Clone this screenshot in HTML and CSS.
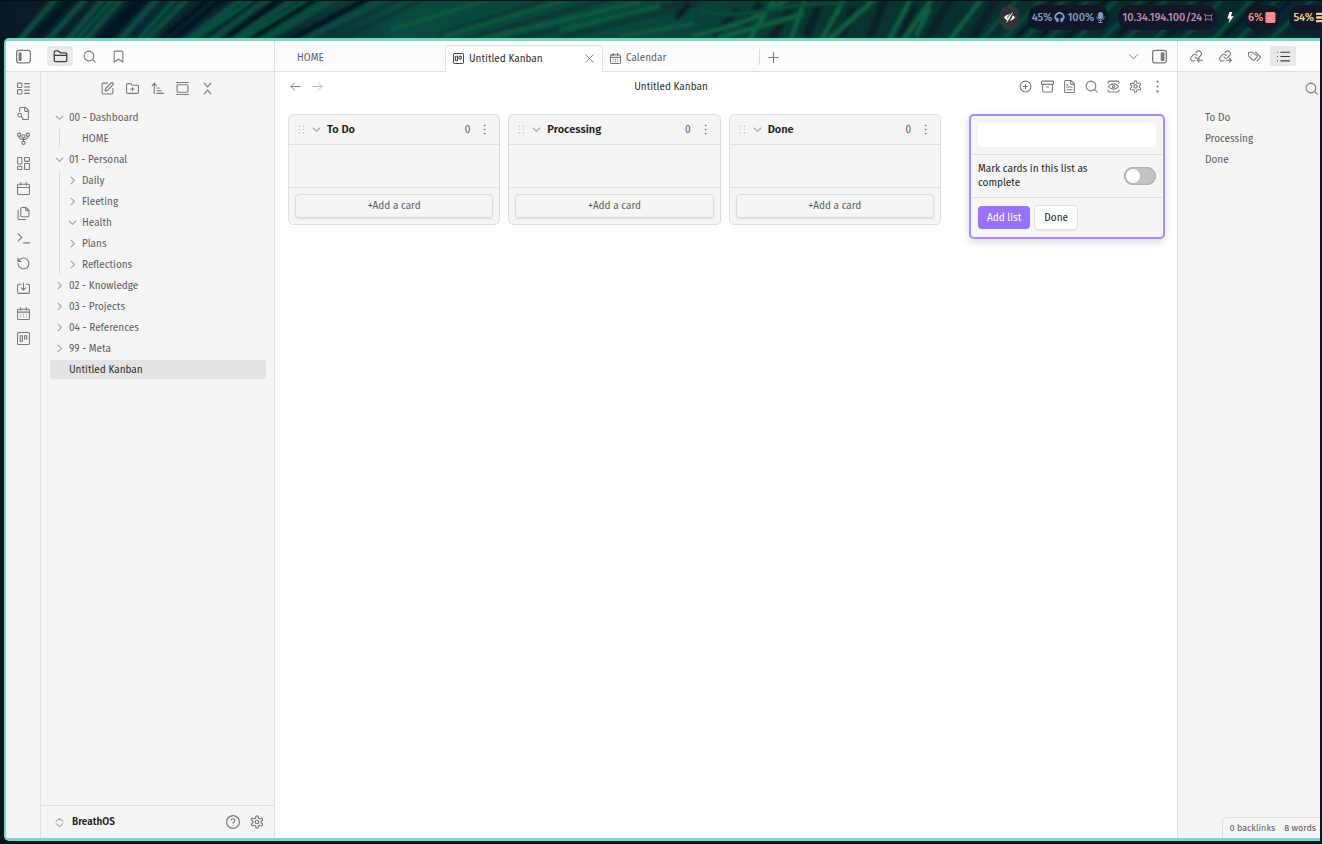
FILE: index.html
```html
<!DOCTYPE html>
<html lang="en">
<head>
<meta charset="utf-8">
<title>Untitled Kanban - BreathOS</title>
<link rel="stylesheet" href="styles.css">
</head>
<body>
<svg class="sprite" aria-hidden="true">
  <symbol id="panel" viewBox="0 0 24 24"><rect x="1" y="2" width="22" height="20" rx="4"/><rect x="5" y="6" width="3" height="12" rx="1" fill="currentColor"/></symbol>
  <symbol id="panel-right" viewBox="0 0 24 24"><rect x="1" y="2" width="22" height="20" rx="4"/><rect x="15" y="6" width="4" height="12" rx="1" fill="currentColor"/></symbol>
  <symbol id="folder" viewBox="0 0 24 24"><path d="M20 20a2 2 0 0 0 2-2V8a2 2 0 0 0-2-2h-7.900a2 2 0 0 1-1.690-.9L9.600 3.900A2 2 0 0 0 7.930 3H4a2 2 0 0 0-2 2v13a2 2 0 0 0 2 2ZM2 10h20"/></symbol>
  <symbol id="search" viewBox="0 0 24 24"><circle cx="11" cy="11" r="9"/><path d="m22.500 22.500-5-5"/></symbol>
  <symbol id="bookmark" viewBox="0 0 24 24"><path d="m20 22-8-5-8 5V4a2 2 0 0 1 2-2h12a2 2 0 0 1 2 2Z"/></symbol>
  <symbol id="list-grid" viewBox="0 0 24 24"><rect x="1" y="2" width="8" height="8" rx="1"/><rect x="1" y="14" width="8" height="8" rx="1"/><path d="M14 3h9M14 9h9M14 15h9M14 21h9"/></symbol>
  <symbol id="file-search" viewBox="0 0 24 24"><path d="M14 2v4a2 2 0 0 0 2 2h5M5 8V3a2 2 0 0 1 2-2h9l5 5v15a2 2 0 0 1-2 2H10M8 18l3 3"/><circle cx="5" cy="15" r="3.500"/></symbol>
  <symbol id="fork" viewBox="0 0 24 24"><circle cx="4" cy="5" r="3"/><circle cx="20" cy="5" r="3"/><circle cx="12" cy="8" r="3"/><circle cx="12" cy="20" r="3"/><path d="M4 8c0 4 3 6 8 6s8-2 8-6M12 11v6"/></symbol>
  <symbol id="dashboard" viewBox="0 0 24 24"><rect x="1" y="1" width="8" height="12" rx="1"/><rect x="14" y="1" width="9" height="7" rx="1"/><rect x="14" y="12" width="9" height="11" rx="1"/><rect x="1" y="17" width="8" height="6" rx="1"/></symbol>
  <symbol id="calendar" viewBox="0 0 24 24"><rect x="1" y="4" width="22" height="19" rx="2"/><path d="M7 1v5M17 1v5M1 10h22"/></symbol>
  <symbol id="files" viewBox="0 0 24 24"><path d="M22 7h-4a2 2 0 0 1-2-2V1M9 18a2 2 0 0 1-2-2V3a2 2 0 0 1 2-2h8l5 5v10a2 2 0 0 1-2 2ZM2 6v15a2 2 0 0 0 2 2h12"/></symbol>
  <symbol id="terminal" viewBox="0 0 24 24"><path d="m2 17 7-7-7-7M12 20h11"/></symbol>
  <symbol id="rotate" viewBox="0 0 24 24"><path d="M2 12A10 10 0 1 0 12 2a10.500 10.500 0 0 0-7.500 3L1.500 8M1.500 2v6h6"/></symbol>
  <symbol id="import" viewBox="0 0 24 24"><path d="M12 2v13M8 11l4 4 4-4M7 4H3a2 2 0 0 0-2 2v13a2 2 0 0 0 2 2h18a2 2 0 0 0 2-2V6a2 2 0 0 0-2-2h-4"/></symbol>
  <symbol id="calendar-days" viewBox="0 0 24 24"><rect x="1" y="4" width="22" height="19" rx="2"/><path d="M7 1v5M17 1v5M1 9.500h22M7 14h.01M12 14h.01M17 14h.01M7 18h.01M12 18h.01M17 18h.01"/></symbol>
  <symbol id="kanban" viewBox="0 0 24 24"><rect x="1" y="1" width="22" height="22" rx="2"/><path d="M6 7h4v10H6ZM14 7h4v6h-4Z"/></symbol>
  <symbol id="edit" viewBox="0 0 24 24"><path d="M12 2H4a2 2 0 0 0-2 2v16a2 2 0 0 0 2 2h16a2 2 0 0 0 2-2v-8M18.400 2a2.300 2.300 0 0 1 3.500 3.500L12 15.500l-4.500 1 1-4.500Z"/></symbol>
  <symbol id="folder-plus" viewBox="0 0 24 24"><path d="M21 21a2 2 0 0 0 2-2V8a2 2 0 0 0-2-2h-8.900a2 2 0 0 1-1.690-.9L9.600 3.900A2 2 0 0 0 7.930 3H3a2 2 0 0 0-2 2v14a2 2 0 0 0 2 2ZM12 10v6M9 13h6"/></symbol>
  <symbol id="sort" viewBox="0 0 24 24"><path d="m2 7 4-5 4 5M6 2v19M11 11h4M11 16h8M11 21h12"/></symbol>
  <symbol id="gallery" viewBox="0 0 24 24"><path d="M1 1h22M1 23h22"/><rect x="2" y="5" width="20" height="14" rx="2"/></symbol>
  <symbol id="collapse" viewBox="0 0 24 24"><path d="m6 22 6-7 6 7M6 2l6 7 6-7"/></symbol>
  <symbol id="updown" viewBox="0 0 24 24"><path d="m3 15 9 8 9-8M3 9l9-8 9 8"/></symbol>
  <symbol id="down" viewBox="0 0 24 24"><path d="m3 8 9 9 9-9"/></symbol>
  <symbol id="right" viewBox="0 0 24 24"><path d="m8 3 9 9-9 9"/></symbol>
  <symbol id="x" viewBox="0 0 24 24"><path d="M4 4l16 16M20 4 4 20"/></symbol>
  <symbol id="plus" viewBox="0 0 24 24"><path d="M12 3v18M3 12h18"/></symbol>
  <symbol id="back" viewBox="0 0 24 24"><path d="m10 20-8-8 8-8M2 12h20"/></symbol>
  <symbol id="forward" viewBox="0 0 24 24"><path d="m14 4 8 8-8 8M2 12h20"/></symbol>
  <symbol id="circle-plus" viewBox="0 0 24 24"><circle cx="12" cy="12" r="10"/><path d="M8 12h8M12 8v8"/></symbol>
  <symbol id="archive" viewBox="0 0 24 24"><rect x="1" y="2" width="22" height="6" rx="1"/><path d="M3 8v12a2 2 0 0 0 2 2h14a2 2 0 0 0 2-2V8M10 13h4"/></symbol>
  <symbol id="file" viewBox="0 0 24 24"><path d="M15 1H5a2 2 0 0 0-2 2v18a2 2 0 0 0 2 2h14a2 2 0 0 0 2-2V7ZM14 1v5a2 2 0 0 0 2 2h5M9 9H7M17 13H7M17 18H7"/></symbol>
  <symbol id="view" viewBox="0 0 24 24"><path d="M2 6V4a2 2 0 0 1 2-2h16a2 2 0 0 1 2 2v2M2 18v2a2 2 0 0 0 2 2h16a2 2 0 0 0 2-2v-2M2.500 12C7 5.500 17 5.500 21.500 12 17 18.500 7 18.500 2.500 12Z"/><circle cx="12" cy="12" r="2"/></symbol>
  <symbol id="gear" viewBox="0 0 24 24"><path d="M12.200 1.500h-.4a2 2 0 0 0-2 2v.7a2 2 0 0 1-1 1.700l-.4.300a2 2 0 0 1-2 0l-.7-.4a2 2 0 0 0-2.700.7l-.2.400a2 2 0 0 0 .7 2.700l.7.400a2 2 0 0 1 1 1.700v.5a2 2 0 0 1-1 1.800l-.7.400a2 2 0 0 0-.7 2.700l.2.400a2 2 0 0 0 2.700.7l.7-.4a2 2 0 0 1 2 0l.4.300a2 2 0 0 1 1 1.700v.7a2 2 0 0 0 2 2h.4a2 2 0 0 0 2-2v-.7a2 2 0 0 1 1-1.700l.4-.3a2 2 0 0 1 2 0l.7.400a2 2 0 0 0 2.700-.7l.2-.4a2 2 0 0 0-.7-2.700l-.7-.4a2 2 0 0 1-1-1.700v-.5a2 2 0 0 1 1-1.800l.7-.4a2 2 0 0 0 .7-2.700l-.2-.4a2 2 0 0 0-2.700-.7l-.7.400a2 2 0 0 1-2 0l-.4-.3a2 2 0 0 1-1-1.700v-.7a2 2 0 0 0-2-2Z"/><circle cx="12" cy="12" r="3"/></symbol>
  <symbol id="dots" viewBox="0 0 24 24"><g fill="currentColor"><circle cx="12" cy="3" r="1"/><circle cx="12" cy="12" r="1"/><circle cx="12" cy="21" r="1"/></g></symbol>
  <symbol id="grip" viewBox="0 0 24 24"><path d="M6 3h.01M6 12h.01M6 21h.01M17 3h.01M17 12h.01M17 21h.01"/></symbol>
  <symbol id="link-in" viewBox="0 0 24 24"><path d="M9 13a4.500 4.500 0 0 0 7 1l3.500-3.500a4.800 4.800 0 0 0-7-7L11 5M13 10a4.500 4.500 0 0 0-7-1l-3.500 3.500a4.800 4.800 0 0 0 6.500 7M23 19h-9M17 15.500l-3.500 3.500 3.500 3.500"/></symbol>
  <symbol id="link-out" viewBox="0 0 24 24"><path d="M9 13a4.500 4.500 0 0 0 7 1l3.500-3.500a4.800 4.800 0 0 0-7-7L11 5M13 10a4.500 4.500 0 0 0-7-1l-3.500 3.500a4.800 4.800 0 0 0 6.500 7M13.500 19h9M19.500 15.500l3.500 3.500-3.500 3.500"/></symbol>
  <symbol id="tags" viewBox="0 0 24 24"><path d="M8 4H2a1 1 0 0 0-1 1v6l7.300 7.300a2.400 2.400 0 0 0 3.400 0l4.600-4.600a2.400 2.400 0 0 0 0-3.400ZM14 4l8 8a2 2 0 0 1 0 2.800L17 20M6 9h.01"/></symbol>
  <symbol id="list" viewBox="0 0 24 24"><path d="M7 4h16M7 12h16M7 20h16M1 4h.01M1 12h.01M1 20h.01"/></symbol>
  <symbol id="help" viewBox="0 0 24 24"><circle cx="12" cy="12" r="11"/><path d="M9 9a3 3 0 0 1 6 1c0 2-3 2.500-3 4M12 17.500h.01"/></symbol>
  <symbol id="eye-off" viewBox="0 0 24 24"><path fill="currentColor" stroke="none" d="M0 12C5 3 19 3 24 12 19 21 5 21 0 12Z"/><circle cx="12" cy="12" r="4" fill="none" stroke="#2f3635"/><path d="m9 22 10-18" stroke="#2f3635" stroke-width="3"/><path d="m6 22 12-20"/></symbol>
  <symbol id="headphones" viewBox="0 0 24 24"><path d="M5 17a9 9 0 1 1 14 0" stroke-width="4"/><path d="M5 14h4v7H7ZM19 14h-4v7h2Z" fill="currentColor"/></symbol>
  <symbol id="mic" viewBox="0 0 18 24"><rect x="4" y="1" width="10" height="14" rx="5" fill="currentColor"/><path d="M1 11c0 10 16 10 16 0M9 18v5M5 23h8" stroke-width="2"/></symbol>
  <symbol id="net" viewBox="0 0 24 24"><path d="M2 4l5 3h10l5-3-3 6 2 10-6-3H8l-5 4 2-8Z"/></symbol>
  <symbol id="bolt" viewBox="0 0 18 24"><path d="m7 0-5 14h5l-2 10L16 9h-6l3-9Z" fill="currentColor" stroke="none"/></symbol>
  <symbol id="chip" viewBox="0 0 24 24"><path d="M3 1h18v22H3ZM1 5h22M1 9h22M1 14h22M1 19h22" fill="currentColor"/></symbol>
  <symbol id="bars" viewBox="0 0 24 24"><path d="M2 4h20M2 12h20M2 20h20" stroke-width="5"/></symbol>
</svg>
<div class="desktop">
  <header class="statusbar">
    <svg class="wallpaper" viewBox="0 0 1322 38" preserveAspectRatio="none" aria-hidden="true">
      <defs>
        <linearGradient id="wall"><stop offset="0" stop-color="#081925"/><stop offset=".12" stop-color="#082b33"/><stop offset=".2" stop-color="#08232d"/><stop offset=".3" stop-color="#0a4a40"/><stop offset=".36" stop-color="#09483d"/><stop offset=".5" stop-color="#0a463b"/><stop offset=".62" stop-color="#08352f"/><stop offset="1" stop-color="#07262d"/></linearGradient>
        <filter id="soft"><feGaussianBlur stdDeviation="1.500"/></filter>
      </defs>
      <rect width="1322" height="38" fill="url(#wall)"/>
      <g filter="url(#soft)" fill="none">
        <path stroke="#0b4a40" stroke-width="6" d="M18 42 58-4M46 42 88-4M66 42 106-4M84 42 124-4M118 42 160-4M144 42 190-4M184 42 246-4M208 42 272-4M228 42 300-4M262 42 340-4M300 42 390-4"/>
        <path stroke="#06583c" stroke-width="4" d="M74 42 116-4M136 42 178-4M190 42 258-4M216 42 288-4M236 42 314-4M252 42 330-4"/>
        <path stroke="#061722" stroke-width="6" d="M32 42 74-4M98 42 140-4M106 42 148-4M158 42 212-4M170 42 226-4M220 42 286-4M246 42 322-4M286 42 372-4"/>
        <path stroke="#08312f" stroke-width="3" d="M308 42 406-4M336 42 430-4M440 34 560-4M456 42 620-4M500 42 700-2M560 38 700 4M600 22 720-4"/>
        <path stroke="#08573d" stroke-width="5" d="M444 36 580-4M470 42 640 2M390 30 500-4M620 36 694 24M560 30 660 6"/>
        <path stroke="#071a26" stroke-width="6" d="M676 18 690 4M714 36 738 10M744 26 760 4M770 40 790 10M806 36 822 0M838 42 854 8M868 42 886-4M900 40 914 6M926 42 952-4M970 42 998-4"/>
        <path stroke="#075f40" stroke-width="5" d="M692 36C736 26 760 18 792-4M718 38 804 14M748 42 776-4M790 42 806-4M820 42 846-4M826 42 876-2M888 42 912-4M902 42 934-4M916 36 930 8M948 42 984-4"/>
        <path stroke="#07493b" stroke-width="4" d="M700 10C744 24 780 0 844 4M980 42 1020-4M1000 42 1046-4M1022 42 1068-4M1046 42 1092-4M1074 42 1120-4M1100 42 1146-4M1124 42 1170-4M1152 42 1198-4M1180 42 1226-4M1210 42 1256-4M1236 42 1280-4M1268 42 1316-4"/>
        <path stroke="#061a25" stroke-width="4" d="M1012 42 1058-4M1036 42 1082-4M1064 42 1110-4M1112 42 1158-4M1162 42 1208-4M1220 42 1264-4M1250 42 1294-4"/>
      </g>
      <path d="M0 0h1322" stroke="#06120f" stroke-width="2"/>
    </svg>
    <span class="pill eye"><svg class="icon"><use href="#eye-off"/></svg></span>
    <span class="pill audio">45% <svg class="icon"><use href="#headphones"/></svg>100% <svg class="icon slim"><use href="#mic"/></svg></span>
    <span class="pill net">10.34.194.100/24 <svg class="icon slim"><use href="#net"/></svg></span>
    <span class="pill bolt"><svg class="icon slim"><use href="#bolt"/></svg></span>
    <span class="pill cpu">6% <svg class="icon"><use href="#chip"/></svg></span>
    <span class="pill mem">54% <svg class="icon"><use href="#bars"/></svg></span>
  </header>

  <div class="window">
    <section class="left">
      <div class="pane-head left-head">
        <button class="tool" aria-label="Toggle left sidebar"><svg class="icon large"><use href="#panel"/></svg></button>
        <nav class="head-tabs">
          <button class="head-tab active" aria-label="Files"><svg class="icon large"><use href="#folder"/></svg></button>
          <button class="head-tab" aria-label="Search"><svg class="icon"><use href="#search"/></svg></button>
          <button class="head-tab" aria-label="Bookmarks"><svg class="icon"><use href="#bookmark"/></svg></button>
        </nav>
      </div>
      <div class="left-body">
        <nav class="ribbon">
          <button class="tool" aria-label="Bases"><svg class="icon"><use href="#list-grid"/></svg></button>
          <button class="tool" aria-label="Quick switcher"><svg class="icon"><use href="#file-search"/></svg></button>
          <button class="tool" aria-label="Graph view"><svg class="icon"><use href="#fork"/></svg></button>
          <button class="tool" aria-label="Canvas"><svg class="icon"><use href="#dashboard"/></svg></button>
          <button class="tool" aria-label="Daily note"><svg class="icon"><use href="#calendar"/></svg></button>
          <button class="tool" aria-label="Templates"><svg class="icon"><use href="#files"/></svg></button>
          <button class="tool" aria-label="Command palette"><svg class="icon"><use href="#terminal"/></svg></button>
          <button class="tool" aria-label="Reload"><svg class="icon"><use href="#rotate"/></svg></button>
          <button class="tool" aria-label="Import"><svg class="icon"><use href="#import"/></svg></button>
          <button class="tool" aria-label="Calendar"><svg class="icon"><use href="#calendar-days"/></svg></button>
          <button class="tool" aria-label="New board"><svg class="icon"><use href="#kanban"/></svg></button>
        </nav>
        <div class="explorer">
          <div class="file-tools">
            <button class="tool" aria-label="New note"><svg class="icon"><use href="#edit"/></svg></button>
            <button class="tool" aria-label="New folder"><svg class="icon"><use href="#folder-plus"/></svg></button>
            <button class="tool" aria-label="Sort"><svg class="icon"><use href="#sort"/></svg></button>
            <button class="tool" aria-label="Reveal file"><svg class="icon"><use href="#gallery"/></svg></button>
            <button class="tool" aria-label="Collapse all"><svg class="icon"><use href="#collapse"/></svg></button>
          </div>
          <ul class="tree">
            <li><a class="row" href="#"><svg class="icon chev"><use href="#down"/></svg>00 - Dashboard</a>
              <ul class="branch"><li><a class="row leaf" href="#">HOME</a></li></ul></li>
            <li><a class="row" href="#"><svg class="icon chev"><use href="#down"/></svg>01 - Personal</a>
              <ul class="branch">
                <li><a class="row" href="#"><svg class="icon chev"><use href="#right"/></svg>Daily</a></li>
                <li><a class="row" href="#"><svg class="icon chev"><use href="#right"/></svg>Fleeting</a></li>
                <li><a class="row" href="#"><svg class="icon chev"><use href="#down"/></svg>Health</a></li>
                <li><a class="row" href="#"><svg class="icon chev"><use href="#right"/></svg>Plans</a></li>
                <li><a class="row" href="#"><svg class="icon chev"><use href="#right"/></svg>Reflections</a></li>
              </ul></li>
            <li><a class="row" href="#"><svg class="icon chev"><use href="#right"/></svg>02 - Knowledge</a></li>
            <li><a class="row" href="#"><svg class="icon chev"><use href="#right"/></svg>03 - Projects</a></li>
            <li><a class="row" href="#"><svg class="icon chev"><use href="#right"/></svg>04 - References</a></li>
            <li><a class="row" href="#"><svg class="icon chev"><use href="#right"/></svg>99 - Meta</a></li>
            <li><a class="row leaf selected" href="#">Untitled Kanban</a></li>
          </ul>
          <footer class="vault">
            <button class="vault-name"><svg class="icon chev"><use href="#updown"/></svg>BreathOS</button>
            <button class="tool" aria-label="Help"><svg class="icon"><use href="#help"/></svg></button>
            <button class="tool" aria-label="Settings"><svg class="icon"><use href="#gear"/></svg></button>
          </footer>
        </div>
      </div>
    </section>

    <main class="main">
      <div class="pane-head tabs">
        <a class="tab home" href="#">HOME</a>
        <div class="tab current"><svg class="icon small"><use href="#kanban"/></svg><a href="#">Untitled Kanban</a><button class="tool" aria-label="Close tab"><svg class="icon small"><use href="#x"/></svg></button></div>
        <a class="tab" href="#"><svg class="icon small"><use href="#calendar-days"/></svg>Calendar</a>
        <button class="tool new-tab" aria-label="New tab"><svg class="icon"><use href="#plus"/></svg></button>
        <button class="tool tab-list" aria-label="Tab list"><svg class="icon small"><use href="#down"/></svg></button>
        <button class="tool" aria-label="Toggle right sidebar"><svg class="icon large"><use href="#panel-right"/></svg></button>
      </div>
      <div class="view-head">
        <div class="history">
          <button class="tool" aria-label="Back"><svg class="icon small"><use href="#back"/></svg></button>
          <button class="tool" aria-label="Forward" disabled><svg class="icon small"><use href="#forward"/></svg></button>
        </div>
        <h1 class="view-title">Untitled Kanban</h1>
        <div class="view-actions">
          <button class="tool" aria-label="Add list"><svg class="icon"><use href="#circle-plus"/></svg></button>
          <button class="tool" aria-label="Archive completed"><svg class="icon"><use href="#archive"/></svg></button>
          <button class="tool" aria-label="Open as markdown"><svg class="icon"><use href="#file"/></svg></button>
          <button class="tool" aria-label="Search board"><svg class="icon"><use href="#search"/></svg></button>
          <button class="tool" aria-label="Board view"><svg class="icon"><use href="#view"/></svg></button>
          <button class="tool" aria-label="Board settings"><svg class="icon"><use href="#gear"/></svg></button>
          <button class="tool" aria-label="More options"><svg class="icon"><use href="#dots"/></svg></button>
        </div>
      </div>
      <div class="board">
        <section class="lane">
          <header class="lane-head"><svg class="icon chev"><use href="#grip"/></svg><svg class="icon chev"><use href="#down"/></svg><h2>To Do</h2><span>0</span><button class="tool" aria-label="List options"><svg class="icon small"><use href="#dots"/></svg></button></header>
          <div class="lane-body"></div>
          <footer class="lane-foot"><button class="add-card">+Add a card</button></footer>
        </section>
        <section class="lane">
          <header class="lane-head"><svg class="icon chev"><use href="#grip"/></svg><svg class="icon chev"><use href="#down"/></svg><h2>Processing</h2><span>0</span><button class="tool" aria-label="List options"><svg class="icon small"><use href="#dots"/></svg></button></header>
          <div class="lane-body"></div>
          <footer class="lane-foot"><button class="add-card">+Add a card</button></footer>
        </section>
        <section class="lane">
          <header class="lane-head"><svg class="icon chev"><use href="#grip"/></svg><svg class="icon chev"><use href="#down"/></svg><h2>Done</h2><span>0</span><button class="tool" aria-label="List options"><svg class="icon small"><use href="#dots"/></svg></button></header>
          <div class="lane-body"></div>
          <footer class="lane-foot"><button class="add-card">+Add a card</button></footer>
        </section>
        <form class="new-list">
          <div class="name-field"><input type="text" aria-label="List title"></div>
          <div class="mark-field"><label for="mark">Mark cards in this list as complete</label><input class="switch" id="mark" type="checkbox"></div>
          <div class="form-actions"><button class="btn primary" type="button">Add list</button><button class="btn" type="button">Done</button></div>
        </form>
      </div>
    </main>

    <aside class="right">
      <div class="pane-head head-tabs right-head">
        <button class="head-tab" aria-label="Backlinks"><svg class="icon"><use href="#link-in"/></svg></button>
        <button class="head-tab" aria-label="Outgoing links"><svg class="icon"><use href="#link-out"/></svg></button>
        <button class="head-tab" aria-label="Tags"><svg class="icon"><use href="#tags"/></svg></button>
        <button class="head-tab active" aria-label="Outline"><svg class="icon"><use href="#list"/></svg></button>
      </div>
      <div class="outline-tools"><button class="tool" aria-label="Search outline"><svg class="icon"><use href="#search"/></svg></button></div>
      <ul class="outline">
        <li><a class="row" href="#">To Do</a></li>
        <li><a class="row" href="#">Processing</a></li>
        <li><a class="row" href="#">Done</a></li>
      </ul>
      <footer class="counts"><span>0 backlinks</span><span>8 words</span></footer>
    </aside>
  </div>
</div>
</body>
</html>
```

FILE: styles.css
```css
* { box-sizing: border-box; }
body {
  margin: 0;
  font: 10px/14px "Fira Sans", "Noto Sans", sans-serif;
  color: #5c5c5c;
  background: #071721;
}
button, input { font: inherit; color: inherit; }
button { margin: 0; padding: 0; border: 0; background: none; }
a { color: inherit; text-decoration: none; }
ul { margin: 0; padding: 0; list-style: none; }
h1, h2 { margin: 0; font-size: 10px; }

.sprite { position: absolute; width: 0; height: 0; }
.icon {
  display: block;
  flex: none;
  width: 13px;
  height: 13px;
  fill: none;
  stroke: currentColor;
  stroke-width: 2;
  stroke-linecap: round;
  stroke-linejoin: round;
}
.icon.small { width: 11px; height: 11px; }
.icon.large { width: 15px; height: 15px; }
.icon.chev { width: 9px; height: 9px; color: #a8a8a8; stroke-width: 3; }
.tool { display: flex; align-items: center; justify-content: center; color: #7a7a7a; }
.tool:disabled { color: #b8b8b8; }

.desktop { display: flex; flex-direction: column; height: 100vh; overflow: hidden; padding: 0 2px 3px 4px; }

.statusbar {
  position: relative;
  display: flex;
  flex: none;
  align-items: flex-start;
  justify-content: flex-end;
  gap: 9px;
  height: 38px;
  margin: 0 -2px 0 -4px;
  padding-top: 5px;
  font-size: 11px;
  font-weight: 500;
}
.wallpaper { position: absolute; inset: 0; width: 100%; height: 100%; }
.pill {
  position: relative;
  display: flex;
  align-items: center;
  gap: 2px;
  height: 25px;
  padding: 0 4px;
  border-radius: 12px;
  background: #111726;
  white-space: nowrap;
}
.pill .icon { width: 11px; height: 11px; }
.pill .icon.slim { width: 9px; }
.pill.eye { background: #2f3635; color: #fff; }
.audio { color: #7d9cc7; }
.net { color: #bd8bb5; }
.cpu { color: #f5918b; }
.mem { margin-right: -9px; color: #f3d38c; }
.pill.bolt { padding: 0; background: none; color: #fff; }

.window {
  display: grid;
  grid-template-columns: 269px minmax(0, 1fr) 143px;
  flex: 1;
  min-height: 0;
  overflow: hidden;
  border: solid #79d9c5;
  border-width: 3px 0 3px 2px;
  border-radius: 5px 0 0 5px;
  background: #fff;
}
.pane-head { display: flex; flex: none; align-items: center; height: 31px; border-bottom: 1px solid #e0e0e0; background: #fcfcfc; }

.left { display: flex; flex-direction: column; min-height: 0; border-right: 1px solid #e0e0e0; background: #f5f5f5; }
.left-head { padding-left: 10px; gap: 16px; }
.head-tabs { display: flex; gap: 3px; }
.head-tab { display: flex; align-items: center; justify-content: center; width: 26px; height: 20px; border-radius: 3px; color: #7a7a7a; }
.head-tab.active { background: #e9e9e9; color: #3c3c3c; }
.left-body { display: flex; flex: 1; min-height: 0; }
.ribbon { display: flex; flex-direction: column; gap: 12px; width: 35px; padding: 10px 0; border-right: 1px solid #e0e0e0; }
.explorer { display: flex; flex: 1; flex-direction: column; }
.file-tools { display: flex; justify-content: center; gap: 12px; padding: 10px 0 13px; }
.tree { flex: 1; padding: 0 8px 0 9px; }
.row { display: flex; align-items: center; gap: 5px; height: 19px; margin-bottom: 2px; padding-left: 5px; border-radius: 3px; }
.row.leaf { padding-left: 19px; }
.row.selected { background: #e4e4e4; color: #2b2b2b; }
.branch { margin-left: 9px; padding-left: 3px; border-left: 1px solid #dcdcdc; }
.vault { display: flex; align-items: center; gap: 10px; height: 33px; padding: 0 10px 0 14px; border-top: 1px solid #e0e0e0; }
.vault .tool .icon { width: 14px; height: 14px; }
.vault-name { display: flex; flex: 1; align-items: center; gap: 8px; color: #222; font-weight: 600; }

.main { display: flex; flex-direction: column; min-width: 0; background: #fff; }
.tabs { padding-right: 10px; }
.tab { display: flex; align-items: center; gap: 5px; width: 156px; height: 26px; margin-top: 4px; padding: 0 7px; }
.tab.home { width: 170px; padding-left: 22px; }
.tab.current { width: 158px; height: 27px; border: 1px solid #e0e0e0; border-bottom: 0; border-radius: 5px 5px 0 0; background: #fff; color: #2b2b2b; }
.tab.current a { flex: 1; }
.new-tab { height: 16px; margin-top: 2px; padding-left: 7px; border-left: 1px solid #dcdcdc; }
.tab-list { margin: 0 13px 0 auto; }
.view-head { display: flex; align-items: center; height: 29px; padding: 0 13px 0 15px; }
.history, .view-actions { display: flex; gap: 11px; }
.view-actions { gap: 9px; }
.view-title { flex: 1; color: #2b2b2b; font-weight: 400; text-align: center; }

.board { display: flex; align-items: flex-start; gap: 8px; padding: 13px 12px 0 13px; }
.lane { flex: 1 1 0; border: 1px solid #e0e0e0; border-radius: 5px; background: #f5f5f5; }
.lane-head { display: flex; align-items: center; gap: 6px; height: 30px; padding: 0 9px 0 8px; border-bottom: 1px solid #e0e0e0; }
.lane-head h2 { flex: 1; color: #1f1f1f; font-size: 11px; font-weight: 600; }
.lane-head .tool { padding-left: 3px; }
.lane-body { height: 42px; }
.lane-foot { padding: 6px; border-top: 1px solid #e0e0e0; }
.add-card { display: block; width: 100%; height: 24px; border: 1px solid #dcdcdc; border-radius: 4px; box-shadow: 0 1px 2px #0000001a; }

.new-list { flex: none; width: 196px; margin-left: 20px; border: 2px solid #a98af0; border-radius: 5px; background: #f5f5f5; box-shadow: 0 3px 10px #00000026; color: #222; }
.name-field { padding: 7px; border-bottom: 1px solid #e0e0e0; }
.name-field input { display: block; width: 100%; height: 24px; padding: 0 6px; border: 0; border-radius: 3px; background: #fff; }
.mark-field { display: flex; align-items: center; gap: 20px; height: 43px; padding: 0 7px; border-bottom: 1px solid #e0e0e0; }
.mark-field label { flex: 1; }
.switch { appearance: none; display: flex; align-items: center; width: 32px; height: 18px; margin: 0; padding: 2px; border-radius: 9px; background: #c4c4c4; box-shadow: inset 0 0 2px #00000066; }
.switch::before { content: ""; width: 14px; height: 14px; border-radius: 50%; background: #fff; }
.form-actions { display: flex; gap: 5px; padding: 8px 7px; }
.btn { height: 23px; padding: 0 9px; border-radius: 4px; background: #fff; box-shadow: 0 0 0 1px #e0e0e0, 0 1px 2px #00000026; }
.btn.primary { background: #9873f7; box-shadow: none; color: #fff; }

.right { display: flex; flex-direction: column; min-height: 0; border-left: 1px solid #e0e0e0; background: #f5f5f5; }
.right-head { padding-left: 5px; }
.outline-tools { display: flex; justify-content: flex-end; padding: 10px 2px 13px 0; }
.outline { flex: 1; padding-left: 22px; }
.counts { display: flex; align-self: flex-end; gap: 9px; padding: 3px 4px 3px 6px; border: 1px solid #dcdcdc; border-width: 1px 0 0 1px; border-radius: 5px 0 0 0; font-size: 9px; }
```
